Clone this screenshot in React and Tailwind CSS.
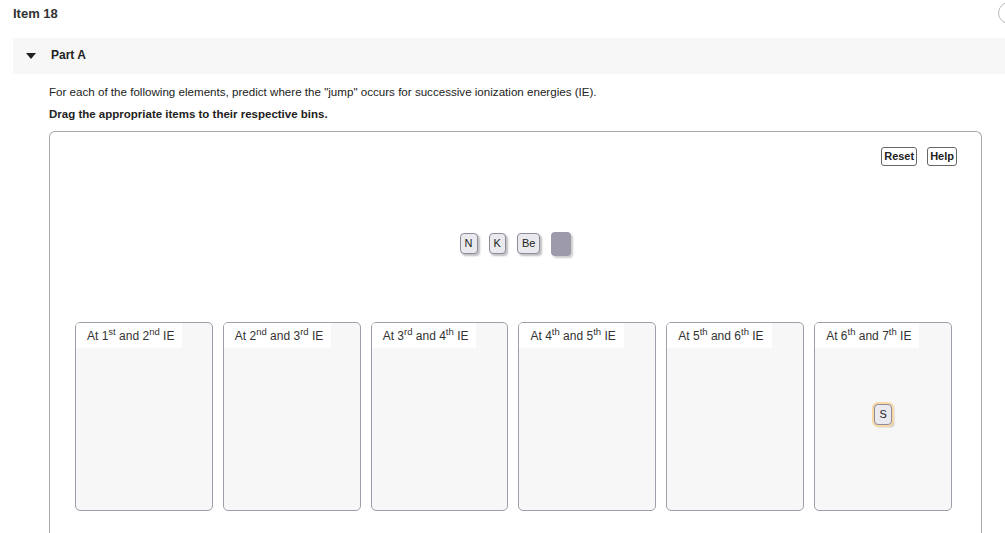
import React from 'react';

function Token({ label, highlight }) {
  return (
    <div
      className={`h-[21px] min-w-[16px] px-[4px] flex items-center justify-center rounded-[4px] border border-[#8e8b9d] bg-[#e9e9ee] text-[11px] text-[#222] shadow-[2px_2px_2px_rgba(0,0,0,0.25)] ${
        highlight ? 'ring-2 ring-[#f7d9a6]' : ''
      }`}
    >
      {label}
    </div>
  );
}

function Bin({ a, sa, b, sb, children }) {
  return (
    <div className="flex-1 h-[189px] rounded-[5px] border border-[#a19dab] bg-[#f7f7f7] flex flex-col">
      <div className="self-start bg-white rounded-tl-[4px] pl-[11px] pr-[8px] pt-[4px] pb-[3px] text-[12px] text-[#333] whitespace-nowrap">
        At {a}
        <sup className="text-[9.5px]">{sa}</sup> and {b}
        <sup className="text-[9.5px]">{sb}</sup> IE
      </div>
      <div className="flex-1 flex items-start justify-center pt-[56px]">{children}</div>
    </div>
  );
}

export default function App() {
  const bins = [
    ['1', 'st', '2', 'nd'],
    ['2', 'nd', '3', 'rd'],
    ['3', 'rd', '4', 'th'],
    ['4', 'th', '5', 'th'],
    ['5', 'th', '6', 'th'],
    ['6', 'th', '7', 'th'],
  ];
  return (
    <div className="relative w-[1005px] h-[533px] overflow-hidden bg-white font-['Liberation_Sans',Arial,sans-serif] text-[#333]">
      <div className="absolute left-[998px] top-[2px] w-[22px] h-[22px] rounded-full border border-[#bbb]" />

      <div className="pl-[13px] pt-[4px] text-[13px] font-bold text-[#333] h-[38px]">Item 18</div>

      <div className="ml-[13px] h-[36px] bg-[#f7f7f7] flex items-center">
        <svg width="10" height="6" viewBox="0 0 10 6" className="ml-[13px]">
          <path d="M0 0 L10 0 L5 6 Z" fill="#222" />
        </svg>
        <span className="ml-[15px] text-[12px] font-bold text-[#222] -mt-[3px]">Part A</span>
      </div>

      <div className="ml-[49px] pt-[9px]">
        <p className="text-[11.6px] text-[#222]">
          For each of the following elements, predict where the "jump" occurs for successive ionization energies (IE).
        </p>
        <p className="mt-[6px] text-[11.5px] font-bold text-[#222]">Drag the appropriate items to their respective bins.</p>

        <div className="mt-[7px] w-[933px] h-[420px] rounded-t-[6px] border border-[#a8a8a8] border-b-0">
          <div className="flex justify-end gap-[10px] pt-[15px] pr-[24px]">
            <button className="h-[19px] px-[2px] rounded-[3px] border border-[#666] bg-white text-[11px] font-bold text-[#222]">Reset</button>
            <button className="h-[19px] px-[2px] rounded-[3px] border border-[#666] bg-white text-[11px] font-bold text-[#222]">Help</button>
          </div>

          <div className="flex justify-center items-center gap-[11px] mt-[66px]">
            <Token label="N" />
            <Token label="K" />
            <Token label="Be" />
            <div className="w-[20px] h-[24px] rounded-[4px] bg-[#9d9aaa] shadow-[2px_2px_2px_rgba(0,0,0,0.2)]" />
          </div>

          <div className="flex gap-[10px] pl-[25px] pr-[29px] mt-[66px]">
            {bins.map(([a, sa, b, sb], i) => (
              <Bin key={i} a={a} sa={sa} b={b} sb={sb}>
                {i === 5 && <Token label="S" highlight />}
              </Bin>
            ))}
          </div>
        </div>
      </div>
    </div>
  );
}
